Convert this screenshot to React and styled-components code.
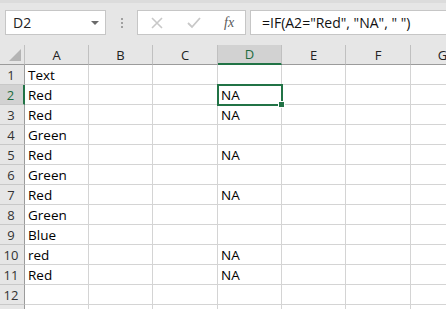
import React from 'react';
import styled, { createGlobalStyle } from 'styled-components';

const GlobalStyle = createGlobalStyle`
  html, body {
    margin: 0;
    padding: 0;
    background: #ffffff;
    overflow: hidden;
  }
  body {
    font-family: "Open Sans", "Noto Sans", "Liberation Sans", sans-serif;
  }
`;

const Window = styled.div`
  width: 446px;
  height: 309px;
  overflow: hidden;
  background: #ffffff;
`;

const Toolbar = styled.div`
  height: 45px;
  box-sizing: border-box;
  background: #e6e6e6;
  border-top: 3px solid #dcdcdc;
  display: flex;
  align-items: flex-start;
  padding: 7px 0 0 5px;
`;

const NameBox = styled.div`
  width: 101px;
  height: 25px;
  box-sizing: border-box;
  background: #ffffff;
  border: 1px solid #c6c6c6;
  display: flex;
  align-items: center;
  justify-content: space-between;
  padding: 0 6px 0 7px;
  font-size: 14px;
  color: #222;
`;

const Caret = styled.span`
  width: 0;
  height: 0;
  border-left: 4px solid transparent;
  border-right: 4px solid transparent;
  border-top: 4px solid #6a6a6a;
  margin-top: 1px;
`;

const Grip = styled.div`
  width: 31px;
  height: 25px;
  display: flex;
  flex-direction: column;
  align-items: center;
  justify-content: center;
  gap: 2px;
  & > span {
    width: 2px;
    height: 2px;
    background: #a0a0a0;
  }
`;

const FuncBox = styled.div`
  width: 109px;
  height: 25px;
  box-sizing: border-box;
  background: #ffffff;
  border: 1px solid #c6c6c6;
  display: flex;
  align-items: center;
  padding-left: 13px;
`;

const IconSlot = styled.span`
  display: flex;
  margin-left: ${p => p.$gap || 0}px;
`;

const FxLabel = styled.span`
  font-family: "Liberation Serif", "DejaVu Serif", serif;
  font-style: italic;
  font-size: 14px;
  color: #5a5a5a;
  margin-left: 23px;
`;

const FormulaInput = styled.div`
  flex: 1;
  margin-left: 4px;
  height: 25px;
  box-sizing: border-box;
  background: #ffffff;
  border: 1px solid #c6c6c6;
  border-right: none;
  display: flex;
  align-items: center;
  padding-left: 11px;
  font-size: 14px;
  color: #111;
  white-space: pre;
`;

const SheetWrap = styled.div`
  position: relative;
`;

const Sheet = styled.div`
  display: grid;
  grid-template-columns: 25px 64px 64px 65px 64px 64px 65px 64px;
  grid-auto-rows: 20px;
`;

const Corner = styled.div`
  background: #e6e6e6;
  border-right: 1px solid #c0c0c0;
  border-bottom: 1px solid #9b9b9b;
  box-sizing: border-box;
  position: relative;
  &::after {
    content: '';
    position: absolute;
    right: 3px;
    bottom: 3px;
    width: 0;
    height: 0;
    border-left: 12px solid transparent;
    border-bottom: 12px solid #b4b4b4;
  }
`;

const ColHeader = styled.div`
  box-sizing: border-box;
  background: ${p => (p.$active ? '#d2d2d2' : '#e6e6e6')};
  border-right: 1px solid #c0c0c0;
  border-bottom: ${p => (p.$active ? '2px solid #217346' : '1px solid #9b9b9b')};
  display: flex;
  align-items: center;
  justify-content: center;
  font-size: 13px;
  color: ${p => (p.$active ? '#1e6b40' : '#222')};
`;

const RowHeader = styled.div`
  box-sizing: border-box;
  background: ${p => (p.$active ? '#d2d2d2' : '#e6e6e6')};
  border-right: ${p => (p.$active ? '2px solid #217346' : '1px solid #9b9b9b')};
  border-bottom: 1px solid #c8c8c8;
  display: flex;
  align-items: center;
  justify-content: center;
  padding-right: 2px;
  font-size: 13px;
  color: ${p => (p.$active ? '#1e6b40' : '#333')};
`;

const Cell = styled.div`
  box-sizing: border-box;
  border-right: 1px solid #d4d4d4;
  border-bottom: 1px solid #d4d4d4;
  display: flex;
  align-items: center;
  padding-left: 3px;
  font-size: 13.5px;
  color: #000;
  white-space: nowrap;
  overflow: visible;
`;

const Selection = styled.div`
  position: absolute;
  box-sizing: border-box;
  border: 2px solid #217346;
  pointer-events: none;
  &::after {
    content: '';
    position: absolute;
    right: -4px;
    bottom: -4px;
    width: 5px;
    height: 5px;
    background: #217346;
    border: 1px solid #ffffff;
  }
`;

const columns = ['A', 'B', 'C', 'D', 'E', 'F', 'G'];

const rows = [
  ['Text', ''],
  ['Red', 'NA'],
  ['Red', 'NA'],
  ['Green', ''],
  ['Red', 'NA'],
  ['Green', ''],
  ['Red', 'NA'],
  ['Green', ''],
  ['Blue', ''],
  ['red', 'NA'],
  ['Red', 'NA'],
  ['', ''],
  ['', ''],
];

function CancelIcon() {
  return (
    <svg width="12" height="12" viewBox="0 0 12 12">
      <path d="M1 1 L11 11 M11 1 L1 11" stroke="#c8c8c8" strokeWidth="1.6" fill="none" />
    </svg>
  );
}

function EnterIcon() {
  return (
    <svg width="14" height="12" viewBox="0 0 14 12">
      <path d="M1 6 L5 10 L13 1" stroke="#c8c8c8" strokeWidth="1.8" fill="none" />
    </svg>
  );
}

export default function App() {
  return (
    <Window>
      <GlobalStyle />
      <Toolbar>
        <NameBox>
          D2
          <Caret />
        </NameBox>
        <Grip>
          <span />
          <span />
          <span />
        </Grip>
        <FuncBox>
          <IconSlot>
            <CancelIcon />
          </IconSlot>
          <IconSlot $gap={24}>
            <EnterIcon />
          </IconSlot>
          <FxLabel>fx</FxLabel>
        </FuncBox>
        <FormulaInput>=IF(A2="Red", "NA", " ")</FormulaInput>
      </Toolbar>
      <SheetWrap>
        <Sheet>
          <Corner />
          {columns.map(c => (
            <ColHeader key={c} $active={c === 'D'}>{c}</ColHeader>
          ))}
          {rows.map(([a, d], i) => (
            <React.Fragment key={i}>
              <RowHeader $active={i === 1}>{i < 12 ? i + 1 : ''}</RowHeader>
              <Cell>{a}</Cell>
              <Cell />
              <Cell />
              <Cell>{d}</Cell>
              <Cell />
              <Cell />
              <Cell />
            </React.Fragment>
          ))}
        </Sheet>
        <Selection style={{ left: 217, top: 39, width: 66, height: 22 }} />
      </SheetWrap>
    </Window>
  );
}
